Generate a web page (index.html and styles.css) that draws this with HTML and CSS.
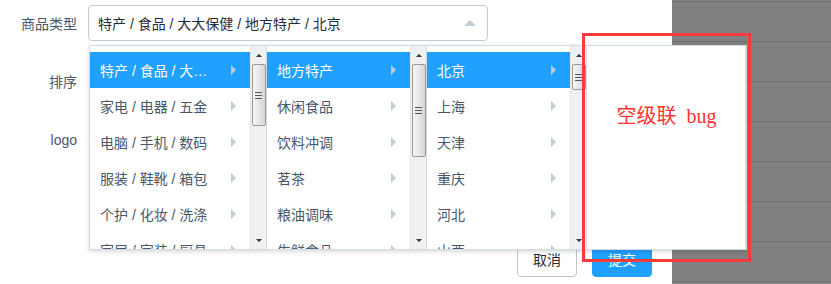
FILE: index.html
```html
<!DOCTYPE html>
<html>
	<head>
		<meta charset="UTF-8">
		<title>商品编辑</title>
		<link rel="stylesheet" href="styles.css">
	</head>
	<body>
		<div class="page">
			<div class="dialog">
				<form class="form">
					<div class="row row-type">
						<label class="label">商品类型</label>
						<div class="cascader">
							<span class="value">特产 / 食品 / 大大保健 / 地方特产 / 北京</span>
							<span class="caret"></span>
						</div>
					</div>
					<div class="row row-sort">
						<label class="label">排序</label>
					</div>
					<div class="row row-logo">
						<label class="label">logo</label>
					</div>
					<div class="footer">
						<button type="button" class="btn">取消</button>
						<button type="button" class="btn btn-primary">提交</button>
					</div>
				</form>

				<!-- 级联下拉菜单 -->
				<div class="popper">
					<div class="menu">
						<ul class="list list-wide">
							<li class="item active"><span>特产 / 食品 / 大大保健</span></li>
							<li class="item"><span>家电 / 电器 / 五金</span></li>
							<li class="item"><span>电脑 / 手机 / 数码</span></li>
							<li class="item"><span>服装 / 鞋靴 / 箱包</span></li>
							<li class="item"><span>个护 / 化妆 / 洗涤</span></li>
							<li class="item"><span>家居 / 家装 / 厨具</span></li>
						</ul>
						<div class="bar">
							<div class="bar-up"></div>
							<div class="thumb thumb-1"></div>
							<div class="bar-down"></div>
						</div>
					</div>
					<div class="menu">
						<ul class="list">
							<li class="item active"><span>地方特产</span></li>
							<li class="item"><span>休闲食品</span></li>
							<li class="item"><span>饮料冲调</span></li>
							<li class="item"><span>茗茶</span></li>
							<li class="item"><span>粮油调味</span></li>
							<li class="item"><span>生鲜食品</span></li>
						</ul>
						<div class="bar">
							<div class="bar-up"></div>
							<div class="thumb thumb-2"></div>
							<div class="bar-down"></div>
						</div>
					</div>
					<div class="menu">
						<ul class="list">
							<li class="item active"><span>北京</span></li>
							<li class="item"><span>上海</span></li>
							<li class="item"><span>天津</span></li>
							<li class="item"><span>重庆</span></li>
							<li class="item"><span>河北</span></li>
							<li class="item"><span>山西</span></li>
						</ul>
						<div class="bar">
							<div class="bar-up"></div>
							<div class="thumb thumb-3"></div>
							<div class="bar-down"></div>
						</div>
					</div>
					<!-- 空的第四级 -->
					<div class="menu menu-empty"></div>
				</div>

				<div class="note">
					<span class="note-text">空级联&nbsp;&nbsp;bug</span>
				</div>
			</div>
			<div class="mask"></div>
		</div>
	</body>
</html>
```

FILE: styles.css
```css
body {
	margin: 0;
	padding: 0;
	font-family: "Liberation Sans", "Noto Sans CJK SC", sans-serif;
	font-size: 14px;
}

.page {
	display: flex;
	width: 831px;
	height: 284px;
	overflow: hidden;
}

.dialog {
	position: relative;
	width: 672px;
	height: 284px;
	background: #fff;
}

.mask {
	flex: 1;
	background-color: #808080;
	background-image: linear-gradient(to bottom, #707070 0, #707070 1px, #808080 1px);
	background-size: 100% 40px;
	background-position: 0 1px;
}

.form {
	margin: 0;
	padding-top: 5px;
}

.row {
	display: flex;
	align-items: center;
	height: 36px;
}

.row-sort {
	margin-top: 22px;
}

.row-logo {
	margin-top: 23px;
}

.label {
	width: 77px;
	margin-right: 11px;
	text-align: right;
	color: #48576a;
}

.cascader {
	display: flex;
	align-items: center;
	box-sizing: border-box;
	width: 400px;
	height: 36px;
	padding: 0 11px 0 9px;
	border: 1px solid #bfcbd9;
	border-radius: 4px;
}

.value {
	flex: 1;
	color: #1f2d3d;
	white-space: nowrap;
}

.caret {
	width: 0;
	height: 0;
	border-left: 6px solid transparent;
	border-right: 6px solid transparent;
	border-bottom: 6px solid #bfcbd9;
}

.footer {
	display: flex;
	justify-content: flex-end;
	gap: 15px;
	margin-top: 83px;
	padding-right: 20px;
}

.btn {
	height: 36px;
	padding: 0 15px;
	border: 1px solid #c4c4c4;
	border-radius: 4px;
	background: #fff;
	color: #1f2d3d;
	font-family: inherit;
	font-size: 14px;
}

.btn-primary {
	border-color: #20a0ff;
	background: #20a0ff;
	color: #fff;
}

/* 下拉 */
.popper {
	position: absolute;
	left: 89px;
	top: 45px;
	display: flex;
	height: 205px;
	box-sizing: border-box;
	border: 1px solid #d1dbe5;
	background: #fff;
	box-shadow: 0 2px 4px rgba(0, 0, 0, .12), 0 0 6px rgba(0, 0, 0, .04);
}

.menu {
	display: flex;
	height: 203px;
	border-right: 1px solid #d1dbe5;
}

.menu-empty {
	width: 158px;
}

.list {
	width: 143px;
	margin: 0;
	padding: 6px 0 0;
	list-style: none;
	overflow: hidden;
}

.list-wide {
	width: 160px;
}

.item {
	display: flex;
	align-items: center;
	box-sizing: border-box;
	height: 36px;
	padding: 0 14px 0 10px;
	color: #48576a;
}

.item span {
	flex: 1;
	min-width: 0;
	overflow: hidden;
	white-space: nowrap;
	text-overflow: ellipsis;
}

.item::after {
	content: "";
	margin-left: 6px;
	border-left: 5px solid #bfcbd9;
	border-top: 5px solid transparent;
	border-bottom: 5px solid transparent;
}

.list-wide .item::after {
	margin-left: 11px;
}

.active {
	background: #20a0ff;
	color: #fff;
}

/* 滚动条 */
.bar {
	display: flex;
	flex-direction: column;
	align-items: center;
	width: 16px;
	background: #f0f0f0;
	border-left: 1px solid #e6e6e6;
	box-sizing: border-box;
}

.bar-up,
.bar-down {
	display: flex;
	align-items: center;
	justify-content: center;
	height: 18px;
}

.bar-down {
	margin-top: auto;
}

.bar-up::before {
	content: "";
	border-left: 3px solid transparent;
	border-right: 3px solid transparent;
	border-bottom: 3px solid #333;
}

.bar-down::before {
	content: "";
	border-left: 3px solid transparent;
	border-right: 3px solid transparent;
	border-top: 3px solid #333;
}

.thumb {
	display: flex;
	align-items: center;
	justify-content: center;
	box-sizing: border-box;
	width: 14px;
	border: 1px solid #9a9a9a;
	border-radius: 2px;
	background: linear-gradient(to right, #f7f7f7, #d6d6d6);
}

.thumb::before {
	content: "";
	width: 7px;
	height: 7px;
	background: repeating-linear-gradient(to bottom, #555 0, #555 1px, transparent 1px, transparent 3px);
}

.thumb-1 {
	height: 62px;
}

.thumb-2 {
	height: 93px;
}

.thumb-3 {
	height: 26px;
}

/* 红框标注 */
.note {
	position: absolute;
	left: 582px;
	top: 33px;
	width: 169px;
	height: 229px;
	box-sizing: border-box;
	border: 3px solid #fc3a3a;
	text-align: center;
}

.note-text {
	display: block;
	margin-top: 70px;
	line-height: 20px;
	font-family: "Liberation Serif", "Noto Sans CJK SC", serif;
	font-size: 20px;
	color: #f33;
}
```
